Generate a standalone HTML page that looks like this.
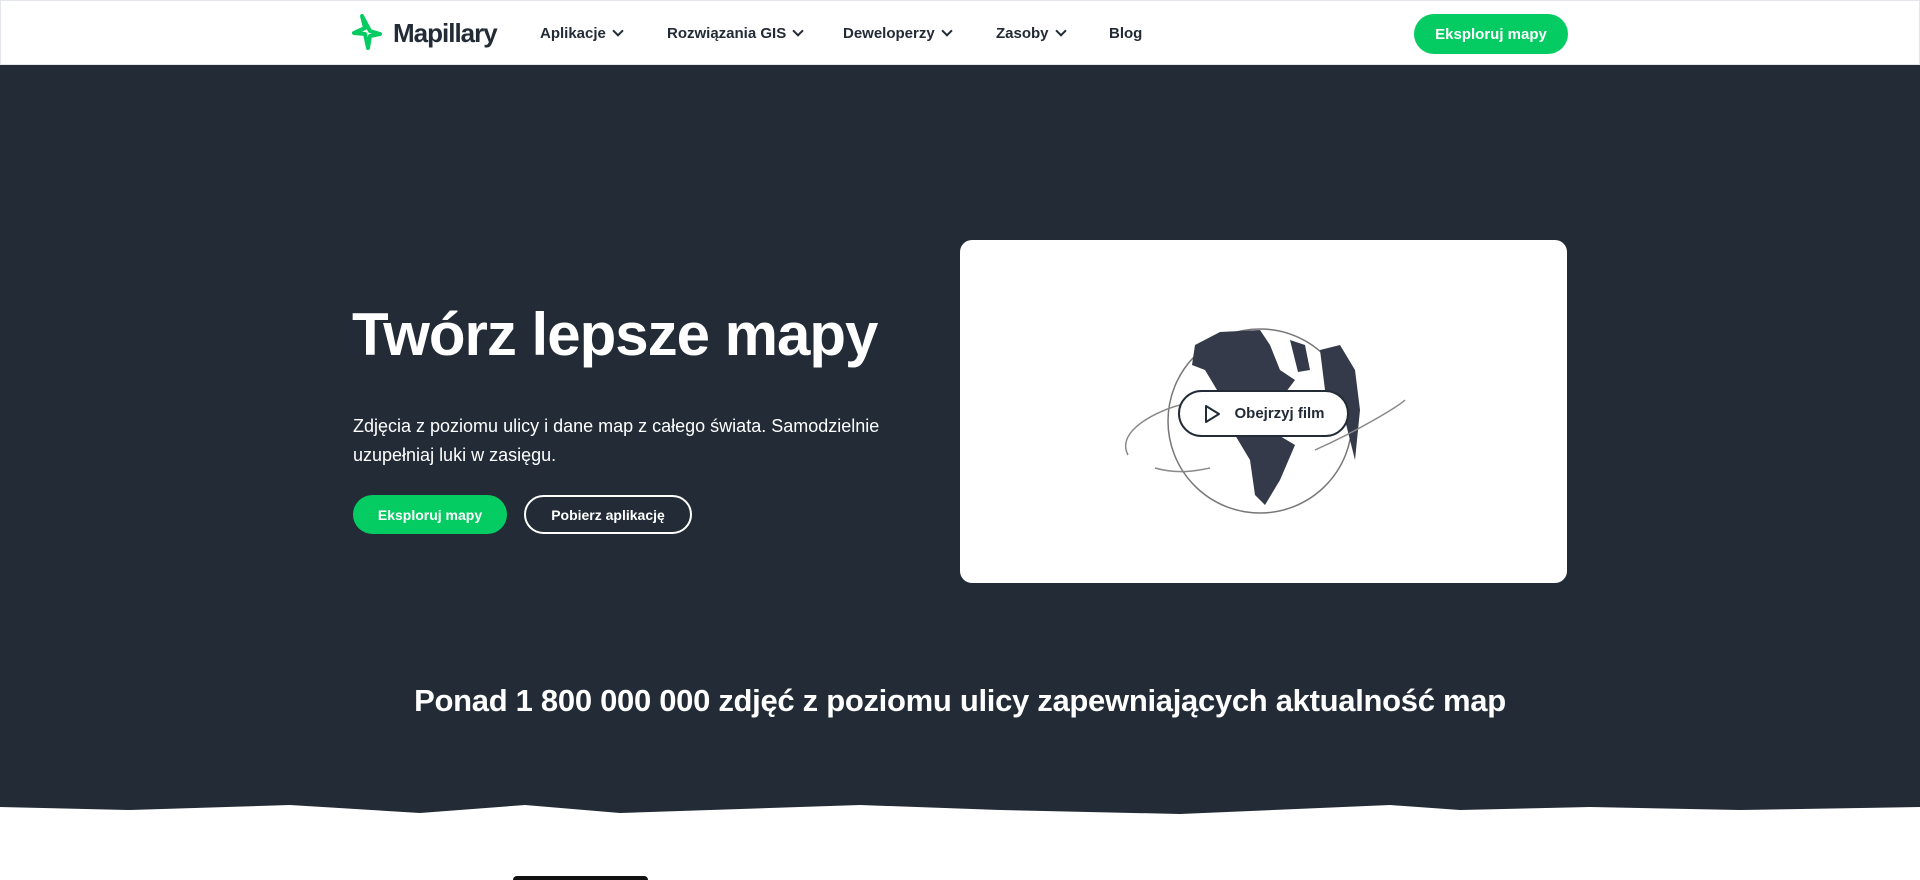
<!DOCTYPE html>
<html><head><meta charset="utf-8"><style>
*{margin:0;padding:0;box-sizing:border-box}
body{width:1920px;height:880px;overflow:hidden;background:#fff;font-family:"Liberation Sans",sans-serif;position:relative}
.nav{position:absolute;left:0;top:0;width:1920px;height:65px;background:#fff;border:1px solid #e3e6ea}
.nav .it{position:absolute;top:24px;font-size:15px;font-weight:bold;color:#222b36}
.chev{display:inline-block;width:8px;height:8px;border-right:2px solid #222b36;border-bottom:2px solid #222b36;transform:rotate(45deg);margin-left:8px;position:relative;top:-3px}
.btn{position:absolute;border-radius:22px;font-weight:bold;font-size:14px;display:flex;align-items:center;justify-content:center}
.green{background:#05cb63;color:#fff}
.hero{position:absolute;top:65px;left:0;width:1920px;height:726px;background:#222b36}
</style></head><body>
<div class="hero"></div>
<svg style="position:absolute;left:0;top:790px" width="1920" height="40" viewBox="0 0 1920 40"><path d="M0 0H1920V17L1740 20L1590 17L1460 20L1390 15L1180 24L1000 20L860 15L620 23L525 15L420 23L290 15L130 20L0 17Z" fill="#222b36"/></svg>
<div class="nav">
<svg style="position:absolute;left:351px;top:13px" width="30" height="36" viewBox="0 0 30 36"><path d="M10 2L13 14L2 19L13 20L16 34L18 22L28 20L18 17Z" fill="none" stroke="#05cb63" stroke-width="4" stroke-linejoin="round"/></svg>
<div style="position:absolute;left:392px;top:17px;font-size:26px;font-weight:bold;color:#222b36;letter-spacing:-1px">Mapillary</div>
<div class="it" style="left:539px">Aplikacje<span class="chev"></span></div>
<div class="it" style="left:666px">Rozwiązania GIS<span class="chev"></span></div>
<div class="it" style="left:842px">Deweloperzy<span class="chev"></span></div>
<div class="it" style="left:995px">Zasoby<span class="chev"></span></div>
<div class="it" style="left:1108px">Blog</div>
<div class="btn green" style="left:1413px;top:13px;width:154px;height:40px;font-size:15px">Eksploruj mapy</div>
</div>
<div style="position:absolute;left:352px;top:300px;font-size:60px;font-weight:bold;color:#fff;letter-spacing:-1px">Twórz lepsze mapy</div>
<div style="position:absolute;left:353px;top:412px;width:560px;font-size:18px;line-height:29px;color:#fff">Zdjęcia z poziomu ulicy i dane map z całego świata. Samodzielnie uzupełniaj luki w zasięgu.</div>
<div class="btn green" style="left:353px;top:495px;width:154px;height:39px">Eksploruj mapy</div>
<div class="btn" style="left:524px;top:495px;width:168px;height:39px;border:2px solid #fff;color:#fff">Pobierz aplikację</div>
<div style="position:absolute;left:960px;top:240px;width:607px;height:343px;background:#fff;border-radius:12px"></div>
<svg style="position:absolute;left:1120px;top:310px" width="300" height="220" viewBox="0 0 300 220">
<circle cx="140" cy="111" r="92" fill="none" stroke="#777" stroke-width="1.5"/>
<path d="M75 35L100 22L140 20L150 35L160 60L175 70L160 90L140 100L150 120L175 135L160 170L145 195L135 185L130 150L115 125L120 100L100 85L85 60L72 55Z" fill="#353a4a"/>
<path d="M170 30L185 35L190 60L178 62Z" fill="#353a4a"/>
<path d="M200 40L220 35L235 60L240 100L235 150L225 110L205 80Z" fill="#353a4a"/>
<path d="M8 145C-5 120 40 100 60 95M35 158C60 165 80 160 90 158M195 140C240 120 280 95 285 90" fill="none" stroke="#888" stroke-width="1.5"/>
</svg>
<div class="btn" style="left:1178px;top:390px;width:171px;height:47px;border:2px solid #222b36;background:#fff;color:#222b36;font-size:15px;border-radius:24px"><svg width="20" height="20" viewBox="0 0 20 20" style="margin-right:12px"><path d="M4 2L17 10L4 18Z" fill="none" stroke="#222b36" stroke-width="2" stroke-linejoin="round"/></svg>Obejrzyj film</div>
<div style="position:absolute;left:0;top:683px;width:1920px;text-align:center;font-size:31px;font-weight:bold;color:#fff;letter-spacing:-0.3px">Ponad 1 800 000 000 zdjęć z poziomu ulicy zapewniających aktualność map</div>
<div style="position:absolute;left:513px;top:876px;width:135px;height:4px;background:#111;border-radius:4px 4px 0 0"></div>
</body></html>
